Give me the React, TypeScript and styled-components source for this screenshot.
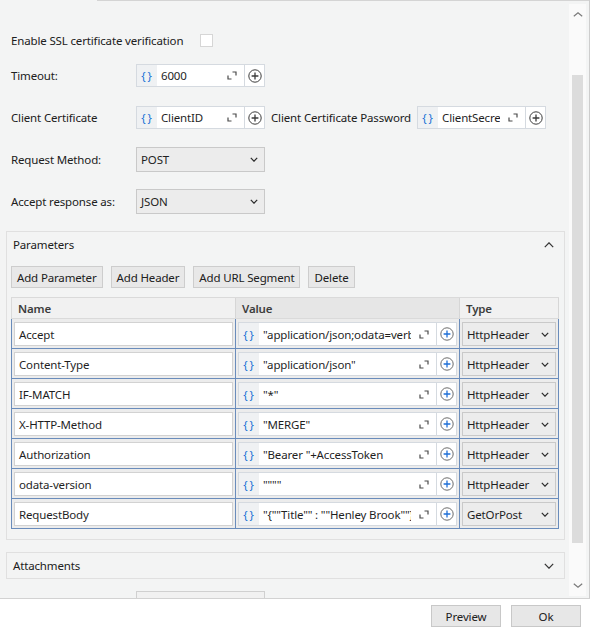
import React, { FC } from "react"
import styled, { createGlobalStyle } from "styled-components"

const GlobalStyle = createGlobalStyle`
  html, body {
    margin: 0;
    padding: 0;
    background: #ffffff;
  }
  body {
    font-family: "Segoe UI", "Noto Sans", "Open Sans", sans-serif;
    font-size: 11.5px;
    letter-spacing: -0.15px;
    color: #1f1f1f;
  }
  * {
    box-sizing: border-box;
  }
`

const BLUE_LINE = "#6a8cbb"

type Param = { name: string; value: string; type: string }

const params: Param[] = [
  { name: "Accept", value: `"application/json;odata=verbose"`, type: "HttpHeader" },
  { name: "Content-Type", value: `"application/json"`, type: "HttpHeader" },
  { name: "IF-MATCH", value: `"*"`, type: "HttpHeader" },
  { name: "X-HTTP-Method", value: `"MERGE"`, type: "HttpHeader" },
  { name: "Authorization", value: `"Bearer "+AccessToken`, type: "HttpHeader" },
  { name: "odata-version", value: `""""`, type: "HttpHeader" },
  { name: "RequestBody", value: `"{""Title"" : ""Henley Brook""}"`, type: "GetOrPost" },
]

const Chevron: FC<{ up?: boolean; w?: number; h?: number; color?: string }> = ({
  up,
  w = 10,
  h = 6,
  color = "#333",
}) => (
  <svg width={w} height={h} viewBox={`0 0 ${w} ${h}`} fill="none">
    <path
      d={up ? `M0.8 ${h - 0.8} L${w / 2} 0.8 L${w - 0.8} ${h - 0.8}` : `M0.8 0.8 L${w / 2} ${h - 0.8} L${w - 0.8} 0.8`}
      stroke={color}
      strokeWidth="1.2"
    />
  </svg>
)

const ExpandIcon: FC = () => (
  <svg width="10" height="9" viewBox="0 0 10 9" fill="none">
    <path d="M1 4.5 V8 H4.5" stroke="#4a4a4a" strokeWidth="1.2" />
    <path d="M5.5 1 H9 V4.5" stroke="#4a4a4a" strokeWidth="1.2" />
  </svg>
)

const PlusIcon: FC<{ $blue?: boolean }> = ({ $blue }) => (
  <svg width="14" height="14" viewBox="0 0 14 14" fill="none">
    <circle cx="7" cy="7" r="6.2" stroke={$blue ? "#6b6b6b" : "#3c3c3c"} strokeWidth="1" />
    <path d="M7 3.6 V10.4 M3.6 7 H10.4" stroke={$blue ? "#1f6fd6" : "#3c3c3c"} strokeWidth="1.3" />
  </svg>
)

const ExprInput: FC<{ value: string; width?: number; blue?: boolean }> = ({ value, width, blue }) => (
  <ExprBox $w={width}>
    <Braces>{"{}"}</Braces>
    <ExprText>{value}</ExprText>
    <ExpandSlot>
      <ExpandIcon />
    </ExpandSlot>
    <AddSlot>
      <PlusIcon $blue={blue} />
    </AddSlot>
  </ExprBox>
)

const Dropdown: FC<{ value: string; width?: number }> = ({ value, width }) => (
  <SelectBox $w={width}>
    <span>{value}</span>
    <Chevron w={8} h={5} color="#2a2a2a" />
  </SelectBox>
)

export default function App() {
  return (
    <>
      <GlobalStyle />
      <Window>
        <Viewer>
          <TopEdge />
          <ViewerBody>
            <Content>
              <FieldRow $h={24}>
                <Label $w={189}>Enable SSL certificate verification</Label>
                <CheckBox />
              </FieldRow>
              <FieldRow $h={23} $mt={12}>
                <Label>Timeout:</Label>
                <ExprInput value="6000" width={129} />
              </FieldRow>
              <FieldRow $h={23} $mt={19}>
                <Label>Client Certificate</Label>
                <ExprInput value="ClientID" width={129} />
                <InlineLabel>Client Certificate Password</InlineLabel>
                <ExprInput value="ClientSecret" width={129} />
              </FieldRow>
              <FieldRow $h={25} $mt={18}>
                <Label>Request Method:</Label>
                <Dropdown value="POST" width={129} />
              </FieldRow>
              <FieldRow $h={25} $mt={17}>
                <Label>Accept response as:</Label>
                <Dropdown value="JSON" width={129} />
              </FieldRow>

              <Panel $mt={17} $pb={10}>
                <PanelHeader>
                  <span>Parameters</span>
                  <Chevron up />
                </PanelHeader>
                <ButtonBar>
                  <SmallButton>Add Parameter</SmallButton>
                  <SmallButton>Add Header</SmallButton>
                  <SmallButton>Add URL Segment</SmallButton>
                  <SmallButton>Delete</SmallButton>
                </ButtonBar>
                <Table>
                  <HeaderRow>
                    <HeaderCell>Name</HeaderCell>
                    <HeaderCell $active>Value</HeaderCell>
                    <HeaderCell>Type</HeaderCell>
                  </HeaderRow>
                  {params.map((p) => (
                    <DataRow key={p.name}>
                      <DataCell>
                        <NameInput>{p.name}</NameInput>
                      </DataCell>
                      <DataCell>
                        <ExprInput value={p.value} blue />
                      </DataCell>
                      <DataCell>
                        <Dropdown value={p.type} />
                      </DataCell>
                    </DataRow>
                  ))}
                </Table>
              </Panel>

              <Panel $mt={12}>
                <PanelHeader>
                  <span>Attachments</span>
                  <Chevron />
                </PanelHeader>
              </Panel>

              <FieldRow $h={23} $mt={12}>
                <Label />
                <HiddenField />
              </FieldRow>
            </Content>
            <ScrollBar>
              <ScrollArrow>
                <Chevron up w={10} h={5} color="#7a7a7a" />
              </ScrollArrow>
              <ScrollTrack>
                <ScrollThumb />
              </ScrollTrack>
              <ScrollArrow>
                <Chevron w={10} h={5} color="#7a7a7a" />
              </ScrollArrow>
            </ScrollBar>
          </ViewerBody>
        </Viewer>
        <Footer>
          <FooterButton>Preview</FooterButton>
          <FooterButton>Ok</FooterButton>
        </Footer>
      </Window>
    </>
  )
}

const Window = styled.div`
  width: 592px;
  height: 639px;
  display: flex;
  flex-direction: column;
  background: #ffffff;
`

const Viewer = styled.div`
  width: 590px;
  height: 599px;
  display: flex;
  flex-direction: column;
  background: #f3f4f4;
  border-right: 1px solid #cdcdcd;
  border-bottom: 1px solid #d2d2d2;
`

const TopEdge = styled.div`
  height: 1px;
  margin-left: 97px;
  background: #d4d4d4;
  flex-shrink: 0;
`

const ViewerBody = styled.div`
  flex: 1;
  min-height: 0;
  display: flex;
`

const Content = styled.div`
  flex: 1;
  min-width: 0;
  overflow: hidden;
  padding: 27px 4px 0 0;
`

const FieldRow = styled.div<{ $h: number; $mt?: number }>`
  display: flex;
  align-items: center;
  height: ${(p) => p.$h}px;
  margin-top: ${(p) => p.$mt ?? 0}px;
  padding-left: 11px;
`

const Label = styled.div<{ $w?: number }>`
  width: ${(p) => p.$w ?? 125}px;
  flex-shrink: 0;
  white-space: nowrap;
  color: #202020;
`

const InlineLabel = styled.div`
  margin: 0 6px;
  white-space: nowrap;
  color: #202020;
`

const CheckBox = styled.div`
  width: 13px;
  height: 13px;
  background: #ffffff;
  border: 1px solid #d6d6d6;
`

const HiddenField = styled.div`
  width: 129px;
  height: 100%;
  border: 1px solid #d0d0d0;
  background: #f1f1f1;
`

const ExprBox = styled.div<{ $w?: number }>`
  display: flex;
  width: ${(p) => (p.$w ? `${p.$w}px` : "100%")};
  height: 100%;
  border: 1px solid #d5dae0;
  background: #ffffff;
`

const Braces = styled.span`
  width: 20px;
  flex-shrink: 0;
  display: flex;
  align-items: center;
  justify-content: center;
  background: #eff1f3;
  color: #2272d6;
  letter-spacing: 2px;
  padding-left: 1px;
`

const ExprText = styled.span`
  flex: 1;
  min-width: 0;
  display: flex;
  align-items: center;
  padding-left: 4px;
  overflow: hidden;
  white-space: nowrap;
  color: #1f1f1f;
`

const ExpandSlot = styled.span`
  display: flex;
  align-items: center;
  margin: 0 7px 0 8px;
`

const AddSlot = styled.span`
  width: 20px;
  flex-shrink: 0;
  display: flex;
  align-items: center;
  justify-content: center;
  border-left: 1px solid #d5dae0;
`

const SelectBox = styled.div<{ $w?: number }>`
  display: flex;
  align-items: center;
  justify-content: space-between;
  width: ${(p) => (p.$w ? `${p.$w}px` : "100%")};
  height: 100%;
  padding: 0 6px 0 4px;
  background: #ececec;
  border: 1px solid #c9c9c9;
  color: #1f1f1f;
  white-space: nowrap;
`

const Panel = styled.div<{ $mt?: number; $pb?: number }>`
  margin-top: ${(p) => p.$mt ?? 0}px;
  margin-left: 6px;
  border: 1px solid #e0e0e0;
  padding: 0 5px ${(p) => p.$pb ?? 0}px 4px;
`

const PanelHeader = styled.div`
  display: flex;
  align-items: center;
  justify-content: space-between;
  height: 25px;
  padding: 0 5px 0 2px;
  color: #202020;
`

const ButtonBar = styled.div`
  display: flex;
  gap: 8px;
  margin-top: 9px;
`

const SmallButton = styled.div`
  height: 22px;
  display: flex;
  align-items: center;
  padding: 0 5px;
  background: #e8e8e8;
  border: 1px solid #cdcdcd;
  color: #202020;
  white-space: nowrap;
`

const Table = styled.div`
  margin-top: 9px;
  width: 548px;
`

const COLUMNS = "224px 224px 99px"

const HeaderRow = styled.div`
  display: grid;
  grid-template-columns: ${COLUMNS};
  height: 22px;
  border-top: 1px solid #dadada;
  border-bottom: 1px solid #dadada;
  border-left: 1px solid #dadada;
`

const HeaderCell = styled.div<{ $active?: boolean }>`
  display: flex;
  align-items: center;
  padding-left: 6px;
  background: ${(p) => (p.$active ? "#e6e6e6" : "#f1f1f1")};
  border-right: 1px solid #d6d6d6;
  font-weight: 600;
  color: #3d3d3d;
`

const DataRow = styled.div`
  display: grid;
  grid-template-columns: ${COLUMNS};
  height: 30px;
  background: #ececec;
  border-left: 1px solid ${BLUE_LINE};
  border-bottom: 1px solid ${BLUE_LINE};
`

const DataCell = styled.div`
  padding: 3px 2px 2px;
  border-right: 1px solid ${BLUE_LINE};
`

const NameInput = styled.div`
  height: 100%;
  display: flex;
  align-items: center;
  padding-left: 4px;
  background: #ffffff;
  border: 1px solid #d2d2d2;
  color: #1f1f1f;
  white-space: nowrap;
  overflow: hidden;
`

const ScrollBar = styled.div`
  width: 17px;
  flex-shrink: 0;
  margin: 3px 3px 2px 0;
  display: flex;
  flex-direction: column;
  align-items: center;
  background: #fafafa;
`

const ScrollArrow = styled.div`
  height: 21px;
  flex-shrink: 0;
  display: flex;
  align-items: center;
  justify-content: center;
`

const ScrollTrack = styled.div`
  flex: 1;
  width: 100%;
  display: flex;
  justify-content: center;
`

const ScrollThumb = styled.div`
  width: 11px;
  height: 468px;
  margin-top: 50px;
  background: #dcdcdc;
`

const Footer = styled.div`
  flex: 1;
  display: flex;
  justify-content: flex-end;
  align-items: flex-start;
  gap: 10px;
  padding: 6px 11px 0 0;
`

const FooterButton = styled.div`
  width: 70px;
  height: 22px;
  display: flex;
  align-items: center;
  justify-content: center;
  background: #e7e7e7;
  border: 1px solid #c8c8c8;
  color: #202020;
`
